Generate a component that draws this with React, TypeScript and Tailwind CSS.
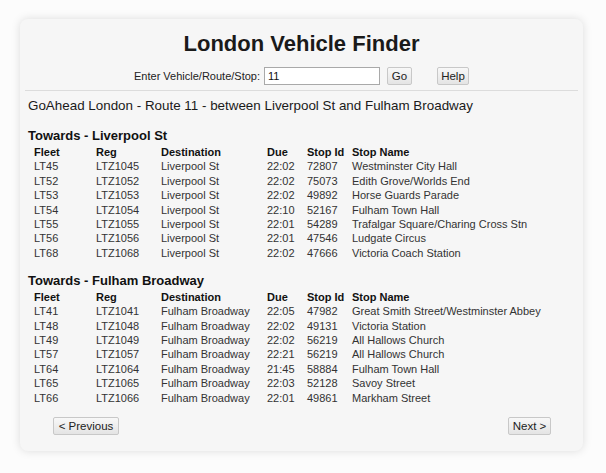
const liverpool = [
  ['LT45', 'LTZ1045', 'Liverpool St', '22:02', '72807', 'Westminster City Hall'],
  ['LT52', 'LTZ1052', 'Liverpool St', '22:02', '75073', 'Edith Grove/Worlds End'],
  ['LT53', 'LTZ1053', 'Liverpool St', '22:02', '49892', 'Horse Guards Parade'],
  ['LT54', 'LTZ1054', 'Liverpool St', '22:10', '52167', 'Fulham Town Hall'],
  ['LT55', 'LTZ1055', 'Liverpool St', '22:01', '54289', 'Trafalgar Square/Charing Cross Stn'],
  ['LT56', 'LTZ1056', 'Liverpool St', '22:01', '47546', 'Ludgate Circus'],
  ['LT68', 'LTZ1068', 'Liverpool St', '22:02', '47666', 'Victoria Coach Station'],
]

const fulham = [
  ['LT41', 'LTZ1041', 'Fulham Broadway', '22:05', '47982', 'Great Smith Street/Westminster Abbey'],
  ['LT48', 'LTZ1048', 'Fulham Broadway', '22:02', '49131', 'Victoria Station'],
  ['LT49', 'LTZ1049', 'Fulham Broadway', '22:02', '56219', 'All Hallows Church'],
  ['LT57', 'LTZ1057', 'Fulham Broadway', '22:21', '56219', 'All Hallows Church'],
  ['LT64', 'LTZ1064', 'Fulham Broadway', '21:45', '58884', 'Fulham Town Hall'],
  ['LT65', 'LTZ1065', 'Fulham Broadway', '22:03', '52128', 'Savoy Street'],
  ['LT66', 'LTZ1066', 'Fulham Broadway', '22:01', '49861', 'Markham Street'],
]

const headers = ['Fleet', 'Reg', 'Destination', 'Due', 'Stop Id', 'Stop Name']
const cols = 'grid grid-cols-[62px_65px_106px_40px_45px_1fr] h-[14.4px] leading-[14.4px] whitespace-nowrap'

const btn =
  'h-[18px] border border-[#c8c8c8] bg-gradient-to-b from-[#f8f8f8] to-[#e4e4e4] text-[11.5px] leading-[16px] text-[#222] rounded-[2px]'

function Section({ title, rows, className }: { title: string; rows: string[][]; className: string }) {
  return (
    <div className={className}>
      <h2 className="pl-[8px] text-[13px] font-bold leading-[16px] text-[#111]">{title}</h2>
      <div className="mt-[1px] pl-[14px] text-[11px]">
        <div className={cols + ' font-bold text-[#111]'}>
          {headers.map((h) => (
            <span key={h}>{h}</span>
          ))}
        </div>
        {rows.map((r) => (
          <div key={r[0]} className={cols + ' text-[#333]'}>
            {r.map((c, i) => (
              <span key={i}>{c}</span>
            ))}
          </div>
        ))}
      </div>
    </div>
  )
}

export default function App() {
  return (
    <div className="w-[606px] h-[473px] bg-[#fcfcfc] pt-[19px] pl-[20px] font-['Liberation_Sans',Arial,sans-serif]">
      <div className="w-[563px] h-[432px] rounded-[8px] bg-[#f6f6f6] shadow-[0_0_10px_rgba(0,0,0,0.13)] pt-[11px]">
        <h1 className="text-center text-[22px] font-bold leading-[28px] text-[#1a1a1a]">London Vehicle Finder</h1>
        <div className="mt-[9px] flex h-[18px] items-center justify-center text-[11px] text-[#222]">
          <span>Enter Vehicle/Route/Stop:</span>
          <input
            defaultValue="11"
            className="ml-[4px] h-[18px] w-[116px] border border-[#a9a9a9] bg-white px-[3px] text-[11px] text-[#111] outline-none"
          />
          <button className={btn + ' ml-[7px] w-[25px]'}>Go</button>
          <button className={btn + ' ml-[25px] w-[32px]'}>Help</button>
        </div>
        <div className="mx-[5px] mt-[5px] h-px bg-[#dcdcdc]" />
        <p className="mt-[6px] pl-[8px] text-[13.4px] leading-[18px] text-[#1a1a1a]">
          GoAhead London - Route 11 - between Liverpool St and Fulham Broadway
        </p>
        <Section title="Towards - Liverpool St" rows={liverpool} className="mt-[13px]" />
        <Section title="Towards - Fulham Broadway" rows={fulham} className="mt-[12.8px]" />
        <div className="mt-[12px] flex justify-between pl-[33px] pr-[32px]">
          <button className={btn + ' w-[66px]'}>&lt; Previous</button>
          <button className={btn + ' w-[43px]'}>Next &gt;</button>
        </div>
      </div>
    </div>
  )
}
